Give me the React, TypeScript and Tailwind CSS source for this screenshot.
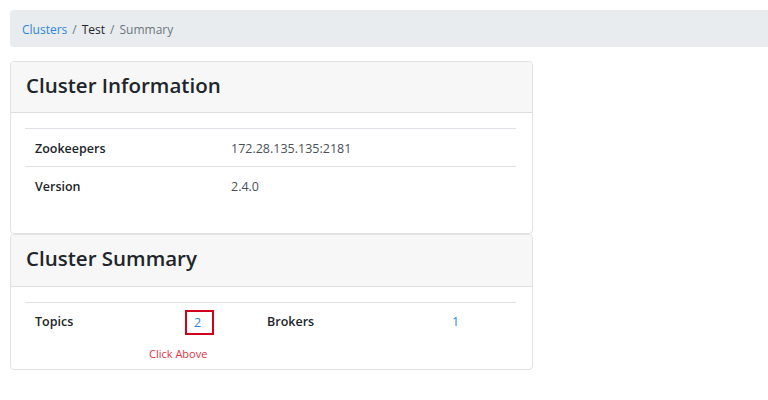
export default function App() {
  return (
    <div className="w-[768px] h-[400px] overflow-hidden bg-white p-[10px] font-['Open_Sans',sans-serif] text-[12.5px] text-[#212529]">
      <nav className="-mr-[30px] h-[37px] rounded bg-[#e9ecef] px-3 pt-[2px] flex items-center text-[12px]">
        <a className="text-[#2b86e0]">Clusters</a>
        <span className="px-[5px] text-[#6c757d]">/</span>
        <span>Test</span>
        <span className="px-[5px] text-[#6c757d]">/</span>
        <span className="text-[#6c757d]">Summary</span>
      </nav>

      <div className="mt-[14px] w-[523px]">
        <div className="rounded border border-[#e2e2e2]">
          <div className="h-[51px] flex items-center px-[15px] pb-[3px] bg-[#f7f7f7] border-b border-[#dfdfdf] rounded-t">
            <h2 className="text-[20.5px] font-semibold">Cluster Information</h2>
          </div>
          <div className="pl-[14px] pr-[16px] pt-[15px] pb-[15px]">
            <table className="w-full mb-[13px] border-collapse">
              <tbody>
                <tr className="h-[38px] border-t border-[#dee2e6]">
                  <td className="w-[196px] px-[10px] pt-[4px] font-semibold">Zookeepers</td>
                  <td className="px-[10px] pt-[4px] text-[#495057]">172.28.135.135:2181</td>
                </tr>
                <tr className="h-[38px] border-t border-[#dee2e6]">
                  <td className="px-[10px] pt-[4px] font-semibold">Version</td>
                  <td className="px-[10px] pt-[4px] text-[#495057]">2.4.0</td>
                </tr>
              </tbody>
            </table>
          </div>
        </div>

        <div className="rounded border border-[#e2e2e2]">
          <div className="h-[52px] flex items-center px-[15px] pb-[3px] bg-[#f7f7f7] border-b border-[#dfdfdf] rounded-t">
            <h2 className="text-[20.5px] font-semibold">Cluster Summary</h2>
          </div>
          <div className="pl-[14px] pr-[16px] pt-[15px] pb-[8px]">
            <table className="w-full border-collapse">
              <tbody>
                <tr className="h-[40px] border-t border-[#dee2e6]">
                  <td className="w-[159px] px-[10px] font-semibold">Topics</td>
                  <td className="w-[73px] pl-[1px]">
                    <span className="inline-block border-2 border-[#d0021b] pl-[7px] pr-[11px] py-[2px] leading-[17px] text-[#2b86e0]">2</span>
                  </td>
                  <td className="w-[185px] px-[10px] font-semibold">Brokers</td>
                  <td className="px-[10px] text-[#2b86e0]">1</td>
                </tr>
              </tbody>
            </table>
            <div className="mt-[5px] pl-[124px] text-[11px] leading-[14px] text-[#dc3545]">Click Above</div>
          </div>
        </div>
      </div>
    </div>
  );
}
